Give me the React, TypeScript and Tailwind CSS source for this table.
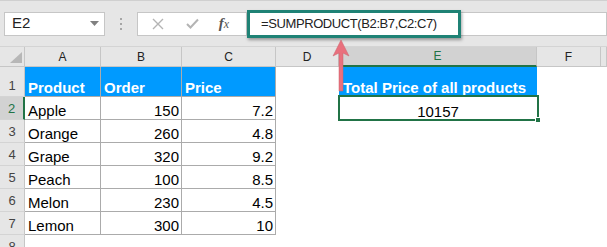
import React from "react";

// column widths: row header, A..G
const colW = ["w-[25px]", "w-[76px]", "w-[81px]", "w-[94px]", "w-[63px]", "w-[198px]", "w-[64px]"];

const products: [string, number, number][] = [
  ["Apple", 150, 7.2],
  ["Orange", 260, 4.8],
  ["Grape", 320, 9.2],
  ["Peach", 100, 8.5],
  ["Melon", 230, 4.5],
  ["Lemon", 300, 10],
];

function RowHeader({ n, active, tall }: { n: number; active?: boolean; tall?: boolean }) {
  return (
    <div
      className={`${colW[0]} ${tall ? "h-[30px]" : "h-[23px]"} flex shrink-0 items-end justify-center border-b border-[#d4d4d4] pb-[3px] text-[13px] leading-[15px] ${
        active
          ? "border-r-2 border-r-[#217346] bg-[#d2d2d2] text-[#217346]"
          : "border-r border-r-[#c6c6c6] bg-[#e6e6e6] text-[#444]"
      }`}
    >
      {n}
    </div>
  );
}

function FormulaBar() {
  return (
    <div className="flex h-[47px] items-center border-t border-b border-t-[#d0d0d0] border-b-[#d4d4d4] bg-[#e6e6e6] pl-[4px]">
      {/* name box */}
      <div className="flex h-[24px] w-[101px] items-center justify-between border border-[#c6c6c6] bg-white pl-[7px] pr-[5px] text-[15px] text-[#222]">
        <span>E2</span>
        <svg width="9" height="5" viewBox="0 0 9 5">
          <path d="M0 0 L9 0 L4.5 5 Z" fill="#808080" />
        </svg>
      </div>
      {/* grip */}
      <div className="ml-[15px] flex w-[2px] flex-col gap-[3px]">
        <span className="h-[2px] w-[2px] bg-[#a6a6a6]" />
        <span className="h-[2px] w-[2px] bg-[#a6a6a6]" />
        <span className="h-[2px] w-[2px] bg-[#a6a6a6]" />
      </div>
      {/* cancel / enter / fx */}
      <div className="ml-[15px] flex h-[24px] w-[110px] border border-[#c6c6c6] bg-white">
        <div className="flex w-[40px] items-center justify-center">
          <svg width="12" height="12" viewBox="0 0 12 12">
            <path d="M1 1 L11 11 M11 1 L1 11" stroke="#b4b4b4" strokeWidth="1.4" />
          </svg>
        </div>
        <div className="flex w-[28px] items-center justify-center">
          <svg width="13" height="11" viewBox="0 0 13 11">
            <path d="M1 6 L4.5 9.5 L12 1.5" stroke="#b4b4b4" strokeWidth="2" fill="none" />
          </svg>
        </div>
        <div className="flex flex-1 items-center justify-center pr-[4px] font-['Liberation_Serif',serif] text-[15px] italic text-[#555]">
          <span className="font-semibold">f</span>
          <span className="text-[12px]">x</span>
        </div>
      </div>
      {/* formula input */}
      <div className="flex h-[24px] flex-1 items-center border border-[#c6c6c6] bg-white pl-[13px] text-[13px] tracking-[-0.4px] text-[#222]">
        =SUMPRODUCT(B2:B7,C2:C7)
      </div>
    </div>
  );
}

export default function App() {
  const hdr = "flex shrink-0 items-center justify-center border-r border-b border-[#c6c6c6] text-[12px] text-[#222]";
  const data = "flex shrink-0 items-end border-r border-b border-[#ababab] text-[15px] leading-[17px] text-black";

  return (
    <div className="relative h-[247px] w-[607px] overflow-hidden bg-white font-['Liberation_Sans',Arial,sans-serif]">
      <FormulaBar />

      {/* column headers */}
      <div className="flex h-[20px] bg-[#e6e6e6]">
        <div className={`${colW[0]} flex shrink-0 items-end justify-end border-r border-b border-[#c6c6c6] pb-[3px] pr-[2px]`}>
          <svg width="12" height="11" viewBox="0 0 12 11">
            <path d="M12 0 L12 11 L0 11 Z" fill="#b7b7b7" />
          </svg>
        </div>
        <div className={`${colW[1]} ${hdr}`}>A</div>
        <div className={`${colW[2]} ${hdr}`}>B</div>
        <div className={`${colW[3]} ${hdr}`}>C</div>
        <div className={`${colW[4]} ${hdr}`}>D</div>
        <div className={`${colW[5]} flex shrink-0 items-center justify-center border-r border-b-2 border-r-[#c6c6c6] border-b-[#217346] bg-[#d2d2d2] text-[12px] text-[#217346]`}>
          E
        </div>
        <div className={`${colW[6]} ${hdr}`}>F</div>
        <div className={`flex-1 ${hdr}`} />
      </div>

      {/* row 1 */}
      <div className="flex h-[30px]">
        <RowHeader n={1} tall />
        <div className={`${colW[1]} ${data} bg-[#009aff] pl-[3px] font-bold text-white`}>Product</div>
        <div className={`${colW[2]} ${data} bg-[#009aff] pl-[3px] font-bold text-white`}>Order</div>
        <div className={`${colW[3]} ${data} bg-[#009aff] pl-[3px] font-bold text-white`}>Price</div>
        <div className={`${colW[4]} shrink-0`} />
        <div className={`${colW[5]} flex shrink-0 items-end bg-[#009aff] pb-[1px] pl-[4px] text-[15px] font-bold leading-[17px] text-white`}>
          Total Price of all products
        </div>
        <div className={`${colW[6]} shrink-0`} />
      </div>

      {/* rows 2-7 */}
      {products.map(([name, order, price], i) => (
        <div key={name} className="flex h-[23px]">
          <RowHeader n={i + 2} active={i === 0} />
          <div className={`${colW[1]} ${data} pl-[3px]`}>{name}</div>
          <div className={`${colW[2]} ${data} justify-end pr-[2px]`}>{order}</div>
          <div className={`${colW[3]} ${data} justify-end pr-[2px]`}>{price}</div>
          <div className={`${colW[4]} shrink-0`} />
          <div className={`${colW[5]} relative flex shrink-0 items-end justify-center text-[15px] leading-[17px] text-black`}>
            {i === 0 && (
              <>
                10157
                <div className="absolute -top-[2px] -left-[1px] -right-[2px] -bottom-[1px] border-2 border-[#217346]" />
                <div className="absolute -right-[4px] -bottom-[3px] h-[6px] w-[6px] border border-white bg-[#217346]" />
              </>
            )}
          </div>
          <div className={`${colW[6]} shrink-0`} />
        </div>
      ))}

      {/* row 8 */}
      <div className="flex h-[23px]">
        <RowHeader n={8} />
      </div>

      {/* callout: highlighted formula and arrow */}
      <div className="pointer-events-none absolute left-[247px] top-[10px] h-[28px] w-[214px] border-[3px] border-[#1f8275] shadow-[1px_2px_3px_rgba(0,0,0,0.35)]" />
      <svg className="pointer-events-none absolute left-[331px] top-[38px]" width="20" height="56" viewBox="0 0 20 56">
        <path d="M10 2 L18 18 L12 15 L12 53 L8 53 L8 15 L2 18 Z" fill="#e9707d" stroke="#c9606b" strokeWidth="0.5" />
      </svg>
    </div>
  );
}
